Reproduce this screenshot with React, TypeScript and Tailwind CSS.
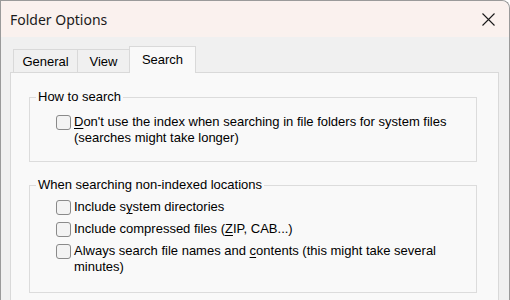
import React from "react";

const sans = "font-['Liberation_Sans',Arial,sans-serif]";

const Check = ({ children }: { children: React.ReactNode }) => (
  <label className="flex items-start gap-[3px]">
    <span className="mt-[1px] w-[15px] h-[15px] shrink-0 rounded-[3px] border border-[#8a8a8a] bg-[#f3f3f3]" />
    <span className="leading-[16px]">{children}</span>
  </label>
);

const Group = ({
  title,
  className,
  children,
}: {
  title: string;
  className: string;
  children: React.ReactNode;
}) => (
  <fieldset className={`w-[448px] border border-[#dcdcdc] ${className}`}>
    <legend className="ml-[6px] px-[2px] leading-[16px]">{title}</legend>
    {children}
  </fieldset>
);

export default function App() {
  return (
    <div
      className={`${sans} w-[510px] h-[300px] overflow-hidden bg-[#f0f0f0] border-l border-t border-r border-[#9a9a9a] rounded-tr-[8px] text-[13px] text-black`}
    >
      <div className="h-[36px] bg-[#faf1ee] flex items-center justify-between pl-[9px] pr-[14px] rounded-tr-[7px]">
        <span className="font-['Noto_Sans',sans-serif] text-[14px] text-[#1a1a1a]">
          Folder Options
        </span>
        <svg width="13" height="13" viewBox="0 0 13 13" className="mt-[1px]">
          <path d="M0.5 0.5 L12.5 12.5 M12.5 0.5 L0.5 12.5" stroke="#1a1a1a" strokeWidth="1.1" />
        </svg>
      </div>

      <div className="pl-[9px] pr-[10px]">
        <div className="mt-[9px] flex items-end h-[26px] pl-[3px]">
          <div className="w-[65px] h-[23px] border-l border-t border-r border-[#d9d9d9] flex items-center justify-center pt-[2px]">
            General
          </div>
          <div className="w-[52px] h-[23px] border-t border-r border-[#d9d9d9] flex items-center justify-center pt-[2px]">
            View
          </div>
          <div className="relative z-10 -ml-px -mb-px w-[67px] h-[27px] border-l border-t border-r border-[#d9d9d9] bg-[#f9f9f9] flex items-center justify-center pb-[1px]">
            Search
          </div>
        </div>

        <div className="h-[260px] border border-[#d9d9d9] bg-[#f9f9f9] pl-[18px] pt-[16px]">
          <Group title="How to search" className="pb-[15px]">
            <div className="pl-[26px] pt-[9px]">
              <Check>
                <span className="underline underline-offset-2">D</span>on't use the index when searching in file folders for system files
                <br />
                (searches might take longer)
              </Check>
            </div>
          </Group>

          <Group title="When searching non-indexed locations" className="mt-[15px] pb-[17px]">
            <div className="pl-[26px] pt-[6px] flex flex-col gap-[6px]">
              <Check>
                Include s<span className="underline underline-offset-2">y</span>stem directories
              </Check>
              <Check>
                Include compressed files (<span className="underline underline-offset-2">Z</span>IP, CAB...)
              </Check>
              <Check>
                Always search file names and <span className="underline underline-offset-2">c</span>ontents (this might take several
                <br />
                minutes)
              </Check>
            </div>
          </Group>
        </div>
      </div>
    </div>
  );
}
